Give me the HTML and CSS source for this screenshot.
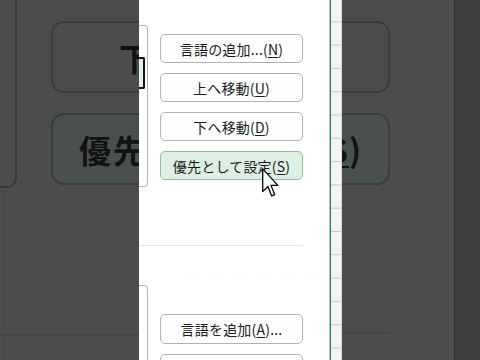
FILE: index.html
```html
<!DOCTYPE html>
<html lang="ja">
<head>
<meta charset="utf-8">
<link rel="stylesheet" href="styles.css">
</head>
<body>
<div class="stage">
  <div class="zoom">
    <div class="z-win z-left">
      <div class="z-list"></div>
      <div class="z-btn z-down"><span>下</span></div>
      <div class="z-btn z-prio"><span>優先</span></div>
      <div class="z-line"></div>
      <div class="z-vline"></div>
    </div>
    <div class="z-win z-right">
      <div class="z-btn z-down-r"></div>
      <div class="z-btn z-prio z-prio-r"><span><u>S</u>)</span></div>
      <div class="z-line z-line-r"></div>
    </div>
  </div>
  <div class="front">
    <div class="see-left"></div>
    <div class="panel">
      <div class="upper">
        <div class="listbox list-top"><div class="sel"></div></div>
        <div class="btn-col">
          <div class="btn">言語の追加...(<u>N</u>)</div>
          <div class="btn">上へ移動(<u>U</u>)</div>
          <div class="btn">下へ移動(<u>D</u>)</div>
          <div class="btn btn-prio">優先として設定(<u>S</u>)</div>
        </div>
      </div>
      <div class="divider"></div>
      <div class="dots"></div>
      <div class="lower">
        <div class="listbox list-bottom"></div>
        <div class="btn-col btn-col-lower">
          <div class="btn">言語を追加(<u>A</u>)...</div>
          <div class="btn"></div>
        </div>
      </div>
    </div>
    <div class="edge"></div>
    <div class="grid-strip"></div>
    <div class="see-right"></div>
    <div class="darker"></div>
  </div>
  <svg class="cursor" width="17" height="30" viewBox="0 0 12 21">
    <path d="M0.5 0.5 L0.5 16.5 L4.2 13 L6.8 19.6 L9 18.7 L6.4 12.2 L11.2 12.2 Z" fill="#fff" stroke="#000" stroke-width="0.9" stroke-linejoin="round"/>
  </svg>
</div>
</body>
</html>
```
FILE: styles.css
```css
html, body {
  margin: 0;
  padding: 0;
}
body {
  width: 480px;
  height: 360px;
  overflow: hidden;
  font-family: "Noto Sans CJK JP", "Noto Sans", sans-serif;
}
.stage {
  position: relative;
  width: 480px;
  height: 360px;
  background: #4c4c4c;
  overflow: hidden;
}

/* zoomed, blurred background copy of the dialog */
.zoom {
  position: absolute;
  inset: 0;
  filter: blur(0.6px);
}
.z-win {
  position: absolute;
  top: 0;
  height: 360px;
  overflow: hidden;
}
.z-left {
  left: 0;
  width: 139px;
}
.z-right {
  left: 341px;
  width: 113px;
}
.z-list {
  position: absolute;
  left: -30px;
  top: -12px;
  width: 47px;
  height: 200px;
  box-sizing: border-box;
  border: 2px solid #3a3a3a;
  border-radius: 10px;
}
.z-vline {
  position: absolute;
  left: 3px;
  top: 190px;
  width: 1px;
  height: 170px;
  background: #464646;
}
.z-btn {
  position: absolute;
  left: 51px;
  width: 180px;
  height: 72px;
  box-sizing: border-box;
  border: 2px solid #393d3b;
  border-radius: 13px;
  display: flex;
  align-items: center;
  font-size: 32px;
  color: #121212;
  letter-spacing: 2px;
  white-space: nowrap;
  font-weight: 600;
}
.z-btn u {
  text-decoration-thickness: 2px;
  text-underline-offset: 3px;
}
.z-down {
  top: 21px;
  padding-left: 66px;
}
.z-prio {
  top: 113px;
  padding-left: 26px;
  background: #49504d;
}
.z-down-r {
  top: 21px;
  left: -131px;
}
.z-prio-r {
  left: -131px;
  padding-left: 0;
  padding-right: 26px;
  justify-content: flex-end;
  letter-spacing: 1px;
}
.z-line {
  position: absolute;
  left: 0;
  top: 334px;
  width: 139px;
  height: 2px;
  background: #454545;
}
.z-line-r {
  top: 332px;
  width: 49px;
}

/* front layer */
.front {
  position: relative;
  display: flex;
  height: 360px;
}
.see-left {
  width: 139px;
  flex: none;
}
.panel {
  width: 190px;
  flex: none;
  background: #ffffff;
  display: flex;
  flex-direction: column;
  overflow: hidden;
}
.upper {
  display: flex;
  height: 245px;
  flex: none;
}
.listbox {
  width: 9px;
  flex: none;
  box-sizing: border-box;
  border: 1px solid #b4b4b4;
  border-left: none;
}
.list-top {
  margin-top: 25px;
  height: 162px;
  border-radius: 0 4px 4px 0;
}
.sel {
  margin-top: 31px;
  width: 6px;
  height: 32px;
  box-sizing: border-box;
  border: 2px solid #151515;
  border-left: none;
  border-radius: 0 2px 2px 0;
  background: #e0f1e5;
}
.btn-col {
  margin-left: 12px;
  width: 143px;
  padding-top: 34px;
  display: flex;
  flex-direction: column;
  gap: 10px;
}
.btn {
  height: 29px;
  flex: none;
  box-sizing: border-box;
  border: 1px solid #b3b3b3;
  border-radius: 5px;
  background: #fdfdfd;
  display: flex;
  align-items: center;
  justify-content: center;
  font-size: 14px;
  color: #1c1c1c;
  white-space: nowrap;
  letter-spacing: 0.2px;
}
.btn u {
  text-underline-offset: 2px;
}
.btn-prio {
  background: #dcefe2;
  border-color: #8fbc9e;
}
.divider {
  height: 1px;
  width: 164px;
  background: #e4e4e4;
  flex: none;
}
.dots {
  height: 1px;
  margin-top: 28px;
  margin-left: 45px;
  width: 140px;
  flex: none;
  background: repeating-linear-gradient(90deg, #f6f6f6 0 3px, transparent 3px 12px);
}
.lower {
  display: flex;
  flex: 1;
  margin-top: -30px;
}
.list-bottom {
  margin-top: 40px;
  height: 200px;
  border-bottom: none;
  border-radius: 0 4px 0 0;
}
.btn-col-lower {
  padding-top: 69px;
}
.btn-col-lower .btn {
  height: 30px;
}
.edge {
  width: 2px;
  flex: none;
  background: linear-gradient(90deg, #a9d3bd 0 1px, #2f7a57 1px 2px);
}
.grid-strip {
  width: 10px;
  flex: none;
  background-color: #f4f4f4;
  background-image: linear-gradient(180deg, transparent 0 22px, #c9c9c9 22px 23.3px);
  background-size: 100% 23.3px;
  background-position: 0 -1px;
  border-right: 1px solid #d8d8d8;
}
.see-right {
  flex: 1;
}
.darker {
  width: 25px;
  flex: none;
  background: #3e3e3e;
  border-left: 1px solid #253530;
}
.cursor {
  position: absolute;
  left: 262px;
  top: 168px;
}
```
